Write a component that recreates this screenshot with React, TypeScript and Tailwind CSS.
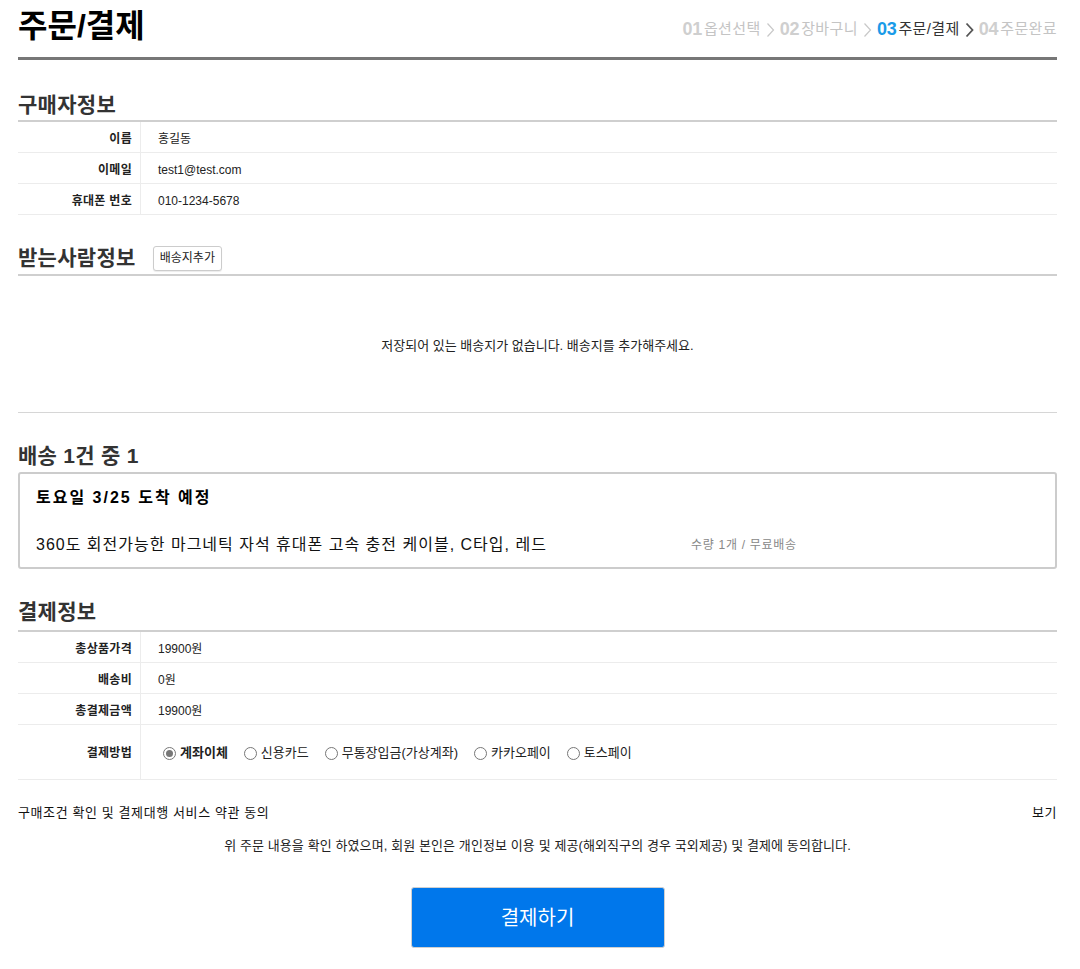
import React from "react";

const font = { fontFamily: '"Liberation Sans", "Noto Sans CJK KR", sans-serif' };

type Row = { label: string; value: React.ReactNode };

const buyerRows: Row[] = [
  { label: "이름", value: "홍길동" },
  { label: "이메일", value: "test1@test.com" },
  { label: "휴대폰 번호", value: "010-1234-5678" },
];

const payRows: Row[] = [
  { label: "총상품가격", value: "19900원" },
  { label: "배송비", value: "0원" },
  { label: "총결제금액", value: "19900원" },
];

const methods = ["계좌이체", "신용카드", "무통장입금(가상계좌)", "카카오페이", "토스페이"];

function Chevron({ dark }: { dark?: boolean }) {
  return (
    <svg width="9" height="16" viewBox="0 0 9 16" className="mx-[5px]" aria-hidden="true">
      <polyline
        points="1.5,1.5 7.5,8 1.5,14.5"
        fill="none"
        stroke={dark ? "#555" : "#c8c8c8"}
        strokeWidth={dark ? 1.8 : 1.2}
      />
    </svg>
  );
}

function Steps() {
  const steps = [
    { no: "01", name: "옵션선택" },
    { no: "02", name: "장바구니" },
    { no: "03", name: "주문/결제", active: true },
    { no: "04", name: "주문완료" },
  ];
  return (
    <div className="flex items-center pt-[16px]">
      {steps.map((s, i) => (
        <div key={s.no} className="flex items-center">
          <span className={`text-[18px] font-bold tracking-[-0.3px] ${s.active ? "text-[#1a9be8]" : "text-[#cfcfcf]"}`}>{s.no}</span>
          <span className={`ml-[2px] text-[15px] tracking-[0.4px] ${s.active ? "text-[#333]" : "text-[#c4c4c4]"}`}>{s.name}</span>
          {i < steps.length - 1 && <Chevron dark={s.active} />}
        </div>
      ))}
    </div>
  );
}

function InfoTable({ rows }: { rows: Row[] }) {
  return (
    <div className="border-t-2 border-[#cfcfcf]">
      {rows.map((r) => (
        <div key={r.label} className="flex h-[31px] border-b border-[#ececec] text-[12px]">
          <div className="flex w-[123px] shrink-0 items-center justify-end border-r border-[#ececec] pt-[3px] pr-[8px] font-bold tracking-[0.3px] text-[#222]">
            {r.label}
          </div>
          <div className="flex items-center pt-[3px] pl-[17px] text-[#222]">{r.value}</div>
        </div>
      ))}
    </div>
  );
}

function Radio({ checked }: { checked?: boolean }) {
  return (
    <span className="flex h-[13px] w-[13px] items-center justify-center rounded-full border border-[#777] bg-white">
      {checked && <span className="h-[7px] w-[7px] rounded-full bg-[#777]" />}
    </span>
  );
}

export default function App() {
  return (
    <div className="min-h-[969px] bg-white text-[#222]" style={font}>
      <div className="ml-[18px] w-[1039px]">
        <div className="flex h-[57px] items-start justify-between">
          <h1 className="pt-[4px] text-[32px] font-bold leading-[44px] text-black">주문/결제</h1>
          <Steps />
        </div>
        <div className="h-[3px] bg-[#777]" />

        <h2 className="mt-[32px] mb-[2px] text-[21px] font-bold leading-[26px] tracking-[0.3px] text-[#333]">구매자정보</h2>
        <InfoTable rows={buyerRows} />

        <div className="mt-[30px] mb-[3px] flex items-center">
          <h2 className="text-[21px] font-bold leading-[26px] tracking-[0.3px] text-[#333]">받는사람정보</h2>
          <button
            type="button"
            className="ml-[17px] h-[25px] rounded-[3px] border border-[#ccc] bg-white px-[6px] text-[12px] text-[#222] shadow-[0_1px_1px_rgba(0,0,0,0.08)]"
          >
            배송지추가
          </button>
        </div>
        <div className="flex h-[139px] items-center justify-center border-t-2 border-b border-t-[#cfcfcf] border-b-[#d6d6d6] pt-[3px] text-[13px] text-[#222]">
          저장되어 있는 배송지가 없습니다. 배송지를 추가해주세요.
        </div>

        <h2 className="mt-[30px] mb-[3px] text-[21px] font-bold leading-[26px] tracking-[0.3px] text-[#333]">배송 1건 중 1</h2>
        <div className="h-[97px] rounded-[3px] border-2 border-[#ccc] px-[16px] pt-[13px]">
          <div className="text-[16px] font-bold leading-[22px] tracking-[2px] text-black">토요일 3/25 도착 예정</div>
          <div className="mt-[25px] flex items-center">
            <span className="w-[655px] text-[16px] leading-[22px] tracking-[1px] text-[#111]">
              360도 회전가능한 마그네틱 자석 휴대폰 고속 충전 케이블, C타입, 레드
            </span>
            <span className="text-[12px] tracking-[0.7px] text-[#888]">수량 1개 / 무료배송</span>
          </div>
        </div>

        <h2 className="mt-[30px] mb-[5px] text-[21px] font-bold leading-[26px] tracking-[0.3px] text-[#333]">결제정보</h2>
        <InfoTable rows={payRows} />
        <div className="flex h-[55px] border-b border-[#ececec] text-[12px]">
          <div className="flex w-[123px] shrink-0 items-center justify-end border-r border-[#ececec] pt-[2px] pr-[8px] font-bold tracking-[0.3px] text-[#222]">
            결제방법
          </div>
          <div className="flex items-center gap-[16px] pt-[2px] pl-[22px]">
            {methods.map((m, i) => (
              <label key={m} className="flex items-center gap-[4px] text-[13px] text-[#222]">
                <Radio checked={i === 0} />
                <span className={i === 0 ? "font-bold" : ""}>{m}</span>
              </label>
            ))}
          </div>
        </div>

        <div className="mt-[25px] flex justify-between text-[13px] leading-[16px] tracking-[0.6px] text-[#111]">
          <span>구매조건 확인 및 결제대행 서비스 약관 동의</span>
          <span>보기</span>
        </div>
        <p className="mt-[17px] text-center text-[13px] leading-[16px] tracking-[0.1px] text-[#222]">
          위 주문 내용을 확인 하였으며, 회원 본인은 개인정보 이용 및 제공(해외직구의 경우 국외제공) 및 결제에 동의합니다.
        </p>
        <div className="mt-[33px] flex justify-center pb-[20px]">
          <button
            type="button"
            className="h-[61px] w-[254px] rounded-[3px] border border-[#d0d0d0] bg-[#0077eb] text-[20px] text-white"
          >
            결제하기
          </button>
        </div>
      </div>
    </div>
  );
}
